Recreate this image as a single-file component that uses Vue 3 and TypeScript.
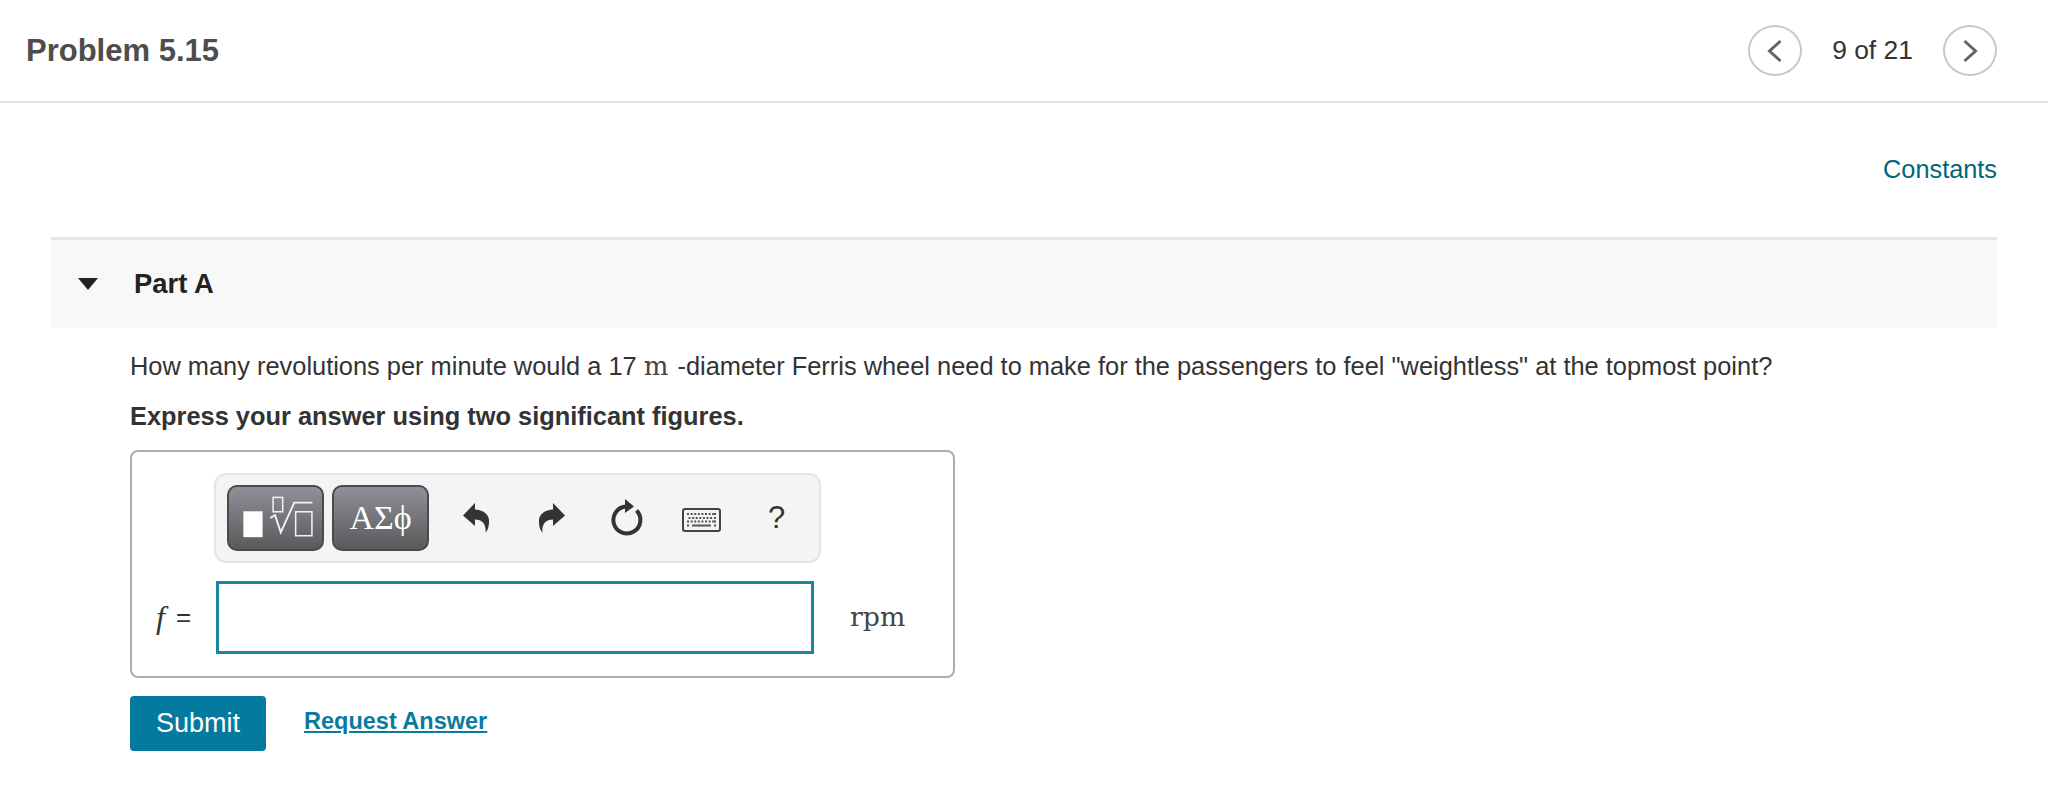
<template>
  <div class="page">
    <header class="topbar">
      <h1 class="title">{{ title }}</h1>
      <nav class="pager">
        <button class="circle" aria-label="Previous">
          <svg width="16" height="24" viewBox="0 0 16 24"><path d="M13.5 2 L2.5 12 L13.5 22" class="chev" /></svg>
        </button>
        <span class="count">{{ position }} of {{ total }}</span>
        <button class="circle" aria-label="Next">
          <svg width="16" height="24" viewBox="0 0 16 24"><path d="M2.5 2 L13.5 12 L2.5 22" class="chev" /></svg>
        </button>
      </nav>
    </header>

    <main class="content">
      <div class="constants-row"><a class="constants">Constants</a></div>

      <section class="part-head">
        <svg class="caret" width="20" height="12" viewBox="0 0 20 12"><path d="M0 0 H20 L10 12 Z" /></svg>
        <h2 class="part-title">Part A</h2>
      </section>

      <div class="part-body">
        <p class="question">
          How many revolutions per minute would a 17 <span class="math">m</span> -diameter Ferris wheel need to make for the passengers to feel "weightless" at the topmost point?
        </p>
        <p class="hint">Express your answer using two significant figures.</p>

        <div class="answer-box">
          <div class="toolbar">
            <button class="tool-btn">
              <svg width="97" height="66" viewBox="0 0 97 66">
                <rect x="15" y="26" width="20" height="27" fill="#fff" />
                <rect x="46" y="11.5" width="10" height="15" fill="none" stroke="#f2f2f2" stroke-width="1.6" />
                <path d="M43 33 L48 30 L54 48 L68 17 H87" fill="none" stroke="#f2f2f2" stroke-width="2" />
                <rect x="69.5" y="26.5" width="17" height="25" fill="none" stroke="#f2f2f2" stroke-width="1.6" />
              </svg>
            </button>
            <button class="tool-btn greek">ΑΣϕ</button>
            <div class="tool undo">
              <svg width="26" height="30" viewBox="0 0 26 30"><path class="solid" :d="arrowPath" /></svg>
            </div>
            <div class="tool redo">
              <svg class="flip" width="26" height="30" viewBox="0 0 26 30"><path class="solid" :d="arrowPath" /></svg>
            </div>
            <div class="tool reload">
              <svg width="34" height="38" viewBox="0 0 34 38">
                <path d="M26.5 11.5 A13.5 13.5 0 1 1 16 7.5" fill="none" stroke="#333" stroke-width="4" />
                <path class="solid" d="M15 0 L24 7.5 L15 14 Z" />
              </svg>
            </div>
            <div class="tool keyboard">
              <svg width="39" height="24" viewBox="0 0 39 24">
                <rect x="1" y="1" width="37" height="22" rx="2" fill="#f4f4f4" stroke="#444" stroke-width="2" />
                <rect v-for="k in keys" :key="k.x + '-' + k.y" :x="k.x" :y="k.y" width="2" height="2" fill="#555" />
                <rect x="10" y="16.5" width="19" height="2" fill="#555" />
              </svg>
            </div>
            <div class="tool help">?</div>
          </div>

          <div class="input-row">
            <span class="label"><i>f</i><span class="eq">=</span></span>
            <input class="answer" type="text" />
            <span class="unit">rpm</span>
          </div>
        </div>

        <div class="actions">
          <button class="submit">Submit</button>
          <a class="request">Request Answer</a>
        </div>
      </div>
    </main>
  </div>
</template>

<script setup lang="ts">
type Key = { x: number; y: number };

const title = "Problem 5.15";
const position = 9;
const total = 21;

const arrowPath =
  "M0 12.5 L12 0 V6.5 C21 7 27 12 26 20 C25.7 25 24 28 22.5 30 C23.5 22 20 16.5 12 16.5 V23 Z";

const keys: Key[] = [];
for (let i = 0; i < 8; i++) keys.push({ x: 5 + i * 3.6, y: 5 });
for (let i = 0; i < 7; i++) keys.push({ x: 6.5 + i * 3.6, y: 9 });
keys.push({ x: 32, y: 5 }, { x: 32, y: 9 }, { x: 32, y: 12.5 });
for (let i = 0; i < 8; i++) keys.push({ x: 5 + i * 3.6, y: 12.5 });
keys.push({ x: 5, y: 16.5 }, { x: 32, y: 16.5 });
</script>

<style>
html,
body {
  background: #fff;
}
</style>

<style scoped>
.page {
  width: 2048px;
  height: 801px;
  overflow: hidden;
  font-family: "Liberation Sans", Arial, sans-serif;
  color: #333;
}

.topbar {
  height: 101px;
  display: flex;
  align-items: center;
  justify-content: space-between;
  padding: 0 51px 0 26px;
  border-bottom: 2px solid #e3e3e3;
}

.title {
  margin: 0;
  font-size: 31px;
  font-weight: 700;
  color: #4d4d4d;
}

.pager {
  display: flex;
  align-items: center;
}

.circle {
  width: 54px;
  height: 51px;
  padding: 0;
  display: flex;
  align-items: center;
  justify-content: center;
  background: #fff;
  border: 2px solid #c8c8c8;
  border-radius: 50%;
}

.chev {
  fill: none;
  stroke: #666;
  stroke-width: 3;
}

.count {
  width: 141px;
  text-align: center;
  font-size: 26.4px;
}

.content {
  padding: 0 51px;
}

.constants-row {
  display: flex;
  justify-content: flex-end;
  padding-top: 44px;
  height: 134px;
  box-sizing: border-box;
}

.constants {
  font-size: 25.3px;
  line-height: 44px;
  color: #00667c;
}

.part-head {
  height: 91px;
  box-sizing: border-box;
  display: flex;
  align-items: center;
  padding-left: 27px;
  background: #f8f8f8;
  border-top: 3px solid #e6e6e6;
}

.caret {
  fill: #222;
}

.part-title {
  margin: 0 0 0 36px;
  font-size: 27.4px;
  font-weight: 700;
  color: #222;
}

.part-body {
  padding-left: 79px;
}

.question {
  margin: 22px 0 0;
  font-size: 25.4px;
  line-height: 32px;
}

.math {
  margin-right: 2px;
  font-family: "DejaVu Serif", serif;
  font-size: 26px;
  color: #444;
}

.hint {
  margin: 18px 0 0;
  font-size: 25.4px;
  line-height: 32px;
  font-weight: 700;
}

.answer-box {
  width: 825px;
  height: 228px;
  margin-top: 18px;
  box-sizing: border-box;
  padding: 21px 0 0 82px;
  border: 2px solid #adadad;
  border-radius: 8px;
}

.toolbar {
  width: 607px;
  height: 90px;
  box-sizing: border-box;
  display: flex;
  align-items: center;
  padding-left: 11px;
  background: #f4f4f4;
  border: 2px solid #e4e4e4;
  border-radius: 12px;
}

.tool-btn {
  width: 97px;
  height: 66px;
  padding: 0;
  margin-right: 8px;
  display: flex;
  align-items: center;
  justify-content: center;
  box-sizing: border-box;
  background: linear-gradient(#918f98, #5a5a5c);
  border: 2px solid #4b4b4b;
  border-radius: 10px;
  color: #fff;
}

.greek {
  font-family: "Liberation Serif", serif;
  font-size: 34px;
}

.tool {
  display: flex;
  align-items: center;
  justify-content: center;
}

.solid {
  fill: #333;
}

.undo {
  margin-left: 26px;
}

.redo {
  margin-left: 50px;
}

.reload {
  margin-left: 45px;
}

.keyboard {
  margin-left: 38px;
  padding-top: 4px;
}

.help {
  margin-left: 47px;
  font-size: 31px;
  color: #333;
}

.flip {
  transform: scaleX(-1);
}

.input-row {
  display: flex;
  align-items: center;
  margin-top: 18px;
  margin-left: -60px;
}

.label {
  width: 62px;
  display: flex;
  align-items: center;
}

.label i {
  font-family: "Liberation Serif", serif;
  font-size: 32px;
  margin-left: 2px;
}

.eq {
  margin-left: 11px;
  font-size: 26px;
}

.answer {
  width: 598px;
  height: 73px;
  box-sizing: border-box;
  background: #fff;
  border: 3px solid #1c84a3;
  outline: none;
}

.unit {
  margin-left: 36px;
  margin-top: -2px;
  font-family: "DejaVu Serif", serif;
  font-size: 26.8px;
  color: #444;
}

.actions {
  display: flex;
  align-items: center;
  margin-top: 18px;
}

.submit {
  width: 136px;
  height: 55px;
  padding: 0;
  background: #057a9f;
  border: none;
  border-radius: 4px;
  color: #fff;
  font-family: "Liberation Sans", Arial, sans-serif;
  font-size: 27px;
}

.request {
  margin-left: 38px;
  margin-top: -4px;
  font-size: 23.5px;
  font-weight: 700;
  color: #0a7a9e;
  text-decoration: underline;
}
</style>
